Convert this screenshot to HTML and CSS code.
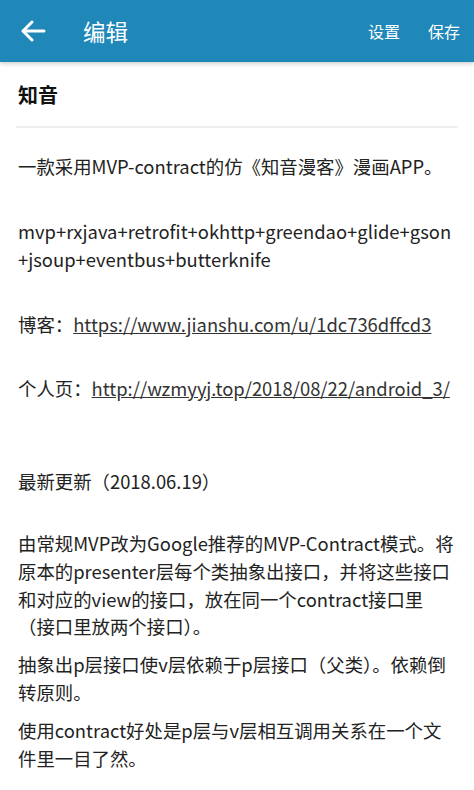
FILE: index.html
```html
<!DOCTYPE html>
<html lang="zh-CN">
<head>
<meta charset="utf-8">
<title>编辑</title>
<link rel="stylesheet" href="styles.css">
</head>
<body>
<header class="toolbar">
  <svg class="back" width="26" height="22" viewBox="0 0 26 22" aria-hidden="true">
    <path d="M24 11H3M12 2L3 11L12 20" fill="none" stroke="#fff" stroke-width="3" stroke-linecap="round" stroke-linejoin="round"/>
  </svg>
  <div class="title">编辑</div>
  <div class="actions">
    <span class="action">设置</span>
    <span class="action">保存</span>
  </div>
</header>
<main class="content">
  <h1 class="heading">知音</h1>
  <div class="divider"></div>
  <div class="body">
    <p class="para first">一款采用MVP-contract的仿《知音漫客》漫画APP。</p>
    <p class="para gap">mvp+rxjava+retrofit+okhttp+greendao+glide+gson<br>+jsoup+eventbus+butterknife</p>
    <p class="para gap">博客：<a class="link">https://www.jianshu.com/u/1dc736dffcd3</a></p>
    <p class="para gap">个人页：<a class="link">http://wzmyyj.top/2018/08/22/android_3/</a></p>
    <p class="para gap2">最新更新（2018.06.19）</p>
    <p class="para gap tight">由常规MVP改为Google推荐的MVP-Contract模式。将原本的presenter层每个类抽象出接口，并将这些接口和对应的view的接口，放在同一个contract接口里（接口里放两个接口）。</p>
    <p class="para tight">抽象出p层接口使v层依赖于p层接口（父类）。依赖倒转原则。</p>
    <p class="para tight">使用contract好处是p层与v层相互调用关系在一个文件里一目了然。</p>
  </div>
</main>
</body>
</html>
```
FILE: styles.css
```css
html, body {
  margin: 0;
  padding: 0;
  background: #ffffff;
}
body {
  font-family: "Noto Sans CJK SC", "Noto Sans", sans-serif;
  color: #222222;
  width: 474px;
  overflow: hidden;
}
.toolbar {
  height: 62px;
  background: #1f88b9;
  display: flex;
  align-items: center;
  box-shadow: 0 2px 4px rgba(0,0,0,0.18);
  position: relative;
  z-index: 1;
}
.back {
  margin-left: 20px;
  flex: none;
}
.title {
  margin-left: 37px;
  color: #ffffff;
  font-size: 22.5px;
  flex: 1;
}
.actions {
  display: flex;
  gap: 28px;
  margin-right: 14px;
}
.action {
  color: #ffffff;
  font-size: 16px;
}
.content {
  padding: 0 16px 0 18px;
}
.heading {
  margin: 0;
  padding-top: 18px;
  font-size: 20px;
  font-weight: bold;
  line-height: 30px;
  color: #111;
}
.divider {
  margin: 16px 0 0 -2px;
  height: 2px;
  background: #efefef;
}
.body {
  font-size: 18.4px;
  line-height: 28.5px;
}
.para {
  margin: 10px 0 0 0;
}
.para.first {
  margin-top: 24px;
}
.para.gap {
  margin-top: 36px;
}
.para.gap2 {
  margin-top: 64px;
}
.para.tight {
  line-height: 27.8px;
}
.para.gap.tight {
  margin-top: 35px;
}
.link {
  color: #333;
  text-decoration: underline;
}
```
